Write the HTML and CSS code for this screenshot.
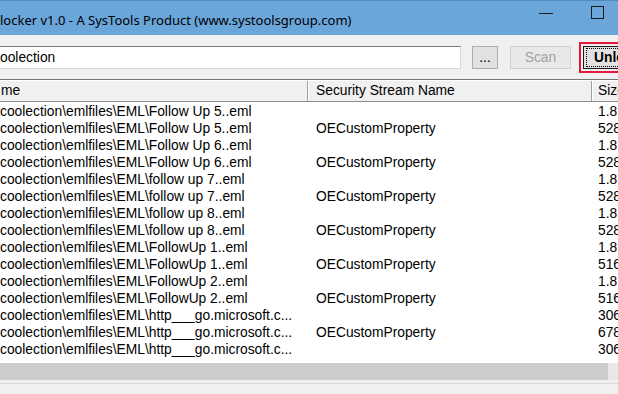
FILE: index.html
```html
<!DOCTYPE html>
<html>
<head>
<meta charset="utf-8">
<link rel="stylesheet" href="styles.css">
</head>
<body>
<div class="window">
  <div class="titlebar">
    <span class="title">locker v1.0 - A SysTools Product (www.systoolsgroup.com)</span>
    <div class="controls">
      <span class="ctl-min"></span>
      <span class="ctl-max"></span>
    </div>
  </div>
  <div class="toolbar">
    <div class="path">oolection</div>
    <button class="btn btn-dots">...</button>
    <button class="btn btn-scan" disabled>Scan</button>
    <div class="highlight">
      <button class="btn btn-unlock"><span class="focus">Unlock</span></button>
    </div>
  </div>
  <div class="list">
    <div class="header">
      <div class="hcell c-name">me</div>
      <div class="hcell c-stream">Security Stream Name</div>
      <div class="hcell c-size">Size</div>
    </div>
    <div class="rows">
      <div class="row"><span class="c-name">coolection\emlfiles\EML\Follow Up 5..eml</span><span class="c-stream"></span><span class="c-size">1.8 KB</span></div>
      <div class="row"><span class="c-name">coolection\emlfiles\EML\Follow Up 5..eml</span><span class="c-stream">OECustomProperty</span><span class="c-size">528 B</span></div>
      <div class="row"><span class="c-name">coolection\emlfiles\EML\Follow Up 6..eml</span><span class="c-stream"></span><span class="c-size">1.8 KB</span></div>
      <div class="row"><span class="c-name">coolection\emlfiles\EML\Follow Up 6..eml</span><span class="c-stream">OECustomProperty</span><span class="c-size">528 B</span></div>
      <div class="row"><span class="c-name">coolection\emlfiles\EML\follow up 7..eml</span><span class="c-stream"></span><span class="c-size">1.8 KB</span></div>
      <div class="row"><span class="c-name">coolection\emlfiles\EML\follow up 7..eml</span><span class="c-stream">OECustomProperty</span><span class="c-size">528 B</span></div>
      <div class="row"><span class="c-name">coolection\emlfiles\EML\follow up 8..eml</span><span class="c-stream"></span><span class="c-size">1.8 KB</span></div>
      <div class="row"><span class="c-name">coolection\emlfiles\EML\follow up 8..eml</span><span class="c-stream">OECustomProperty</span><span class="c-size">528 B</span></div>
      <div class="row"><span class="c-name">coolection\emlfiles\EML\FollowUp 1..eml</span><span class="c-stream"></span><span class="c-size">1.8 KB</span></div>
      <div class="row"><span class="c-name">coolection\emlfiles\EML\FollowUp 1..eml</span><span class="c-stream">OECustomProperty</span><span class="c-size">516 B</span></div>
      <div class="row"><span class="c-name">coolection\emlfiles\EML\FollowUp 2..eml</span><span class="c-stream"></span><span class="c-size">1.8 KB</span></div>
      <div class="row"><span class="c-name">coolection\emlfiles\EML\FollowUp 2..eml</span><span class="c-stream">OECustomProperty</span><span class="c-size">516 B</span></div>
      <div class="row"><span class="c-name">coolection\emlfiles\EML\http___go.microsoft.c...</span><span class="c-stream"></span><span class="c-size">306 B</span></div>
      <div class="row"><span class="c-name">coolection\emlfiles\EML\http___go.microsoft.c...</span><span class="c-stream">OECustomProperty</span><span class="c-size">678 B</span></div>
      <div class="row"><span class="c-name">coolection\emlfiles\EML\http___go.microsoft.c...</span><span class="c-stream"></span><span class="c-size">306 B</span></div>
    </div>
    <div class="hscroll"><div class="thumb"></div></div>
  </div>
  <div class="statusbar"></div>
</div>
</body>
</html>
```

FILE: styles.css
```css
html, body {
  margin: 0;
  padding: 0;
}
body {
  width: 618px;
  height: 394px;
  overflow: hidden;
  background: #f0f0f0;
  font-family: "Liberation Sans", Arial, sans-serif;
  font-size: 13.8px;
  color: #000;
}
.window {
  width: 618px;
  height: 394px;
  overflow: hidden;
  display: flex;
  flex-direction: column;
}
.titlebar {
  height: 35px;
  flex: none;
  box-sizing: border-box;
  background: #6ba6da;
  border-top: 1px solid #5288bb;
  display: flex;
  align-items: flex-start;
}
.title {
  font-family: "Noto Sans", "Open Sans", sans-serif;
  font-size: 13px;
  color: #000;
  white-space: nowrap;
  margin-top: 10px;
  line-height: 18px;
}
.controls {
  margin-left: auto;
  display: flex;
  align-items: flex-start;
  margin-top: 5px;
  margin-right: 14px;
}
.ctl-min {
  width: 14px;
  height: 1px;
  background: #1b1b1b;
  margin-top: 7px;
  margin-right: 38px;
}
.ctl-max {
  width: 11px;
  height: 11px;
  border: 1px solid #1b1b1b;
}
.toolbar {
  height: 44px;
  flex: none;
  box-sizing: border-box;
  display: flex;
  align-items: flex-start;
  padding-top: 11px;
  white-space: nowrap;
}
.path {
  width: 461px;
  height: 23px;
  box-sizing: border-box;
  background: #fff;
  border: 1px solid #7a7a7a;
  border-left: none;
  border-bottom-color: #d6d6d6;
  border-right-color: #d6d6d6;
  line-height: 21px;
  padding-left: 0;
  flex: none;
}
.btn {
  font-family: "Liberation Sans", Arial, sans-serif;
  font-size: 13.8px;
  height: 23px;
  box-sizing: border-box;
  padding: 0;
  background: #e1e1e1;
  border: 1px solid #adadad;
  color: #000;
  flex: none;
}
.btn-dots {
  width: 26px;
  margin-left: 11px;
  line-height: 19px;
}
.btn-scan {
  width: 61px;
  margin-left: 12px;
  color: #a0a0a0;
  background: #e9e9e9;
  border-color: #d0d0d0;
}
.highlight {
  margin-left: 8px;
  margin-top: -4px;
  border: 2px solid #e4173c;
  padding: 2px;
  flex: none;
}
.btn-unlock {
  width: 90px;
  height: 23px;
  border: 1px solid #1a1a1a;
  background: #e1e1e1;
  padding: 1px 2px;
  text-align: left;
  font-weight: bold;
  display: block;
}
.focus {
  display: block;
  height: 19px;
  box-sizing: border-box;
  border: 1px dotted #000;
  padding-left: 7px;
  line-height: 17px;
}
.list {
  flex: none;
  border-top: 1px solid #767676;
  background: #fff;
}
.header {
  height: 22px;
  box-sizing: border-box;
  display: flex;
  background: #f0f0f0;
  border-top: 1px solid #fff;
  border-bottom: 1px solid #8e8e8e;
  box-shadow: 0 1px 0 #d5d5d5;
}
.hcell {
  line-height: 20px;
  box-sizing: border-box;
  white-space: nowrap;
  overflow: hidden;
}
.header .c-name {
  width: 308px;
  border-right: 1px solid #a0a0a0;
  padding-left: 1px;
}
.header .c-stream {
  width: 284px;
  border-right: 1px solid #a0a0a0;
  border-left: 1px solid #fff;
  padding-left: 7px;
}
.header .c-size {
  flex: 1;
  border-left: 1px solid #fff;
  padding-left: 5px;
}
.rows {
  height: 261px;
  padding-top: 1px;
  box-sizing: border-box;
  background: #fff;
}
.row {
  height: 17px;
  line-height: 17px;
  display: flex;
  white-space: nowrap;
}
.row span {
  overflow: hidden;
  display: block;
  flex: none;
}
.row .c-name {
  width: 316px;
}
.row .c-stream {
  width: 282px;
}
.row .c-size {
  width: 40px;
}
.hscroll {
  height: 17px;
  background: #e8e8e8;
  display: flex;
}
.thumb {
  width: 608px;
  height: 17px;
  background: #cdcdcd;
}
.statusbar {
  flex: 1;
  background: #f0f0f0;
  box-shadow: inset 0 3px 0 #f0f0f0, inset 0 4px 0 #d9d9d9;
}
```
